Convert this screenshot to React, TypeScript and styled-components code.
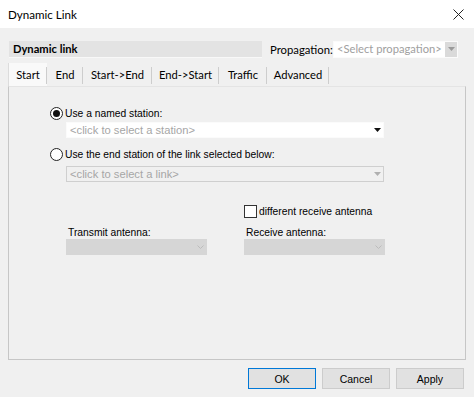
import styled, { createGlobalStyle } from "styled-components";

const GlobalStyle = createGlobalStyle`
  html, body {
    margin: 0;
    padding: 0;
    background: #f0f0f0;
  }
`;

const uiFont = `"Segoe UI", Lato, "Noto Sans", sans-serif`;
const labelFont = `"Liberation Sans", Arial, sans-serif`;

const Window = styled.div`
  width: 474px;
  height: 397px;
  display: flex;
  flex-direction: column;
  background: #f0f0f0;
  font-family: ${uiFont};
  color: #000;
  overflow: hidden;
`;

const TitleBar = styled.div`
  height: 28px;
  flex: none;
  background: #fff;
  display: flex;
  align-items: center;
  justify-content: space-between;
  padding: 0 10px 0 8px;
  font-size: 11.6px;
`;

const Body = styled.div`
  flex: 1;
  display: flex;
  flex-direction: column;
  padding: 12px 8px 8px 8px;
`;

const HeaderRow = styled.div`
  display: flex;
  align-items: center;
  height: 18px;
`;

const NameBox = styled.div`
  width: 249px;
  height: 16px;
  margin-left: 1px;
  background: #e3e3e3;
  border-bottom: 1px solid #f8f8f8;
  font-weight: bold;
  font-size: 11.2px;
  line-height: 16px;
  padding-left: 4px;
`;

const PropLabel = styled.span`
  margin-left: 8px;
  font-size: 11.3px;
  width: 63px;
  white-space: nowrap;
`;

const Combo = styled.div<{ $width: number; $disabled?: boolean; $bg?: string }>`
  width: ${(p) => p.$width}px;
  height: 16px;
  box-sizing: border-box;
  background: ${(p) => p.$bg ?? "#fff"};
  border: 1px solid ${(p) => (p.$disabled ? "#cfcfcf" : "#fbfbfb")};
  display: flex;
  align-items: center;
  justify-content: space-between;
  font-size: 11.2px;
  color: #a6a6a6;
  padding-left: 3px;
`;

const ComboText = styled.span`
  white-space: nowrap;
  line-height: 14px;
`;

const ArrowBtn = styled.div<{ $bg?: string }>`
  width: 12px;
  height: 100%;
  display: flex;
  align-items: center;
  justify-content: center;
  background: ${(p) => p.$bg ?? "transparent"};
`;

const Tabs = styled.div`
  display: flex;
  align-items: stretch;
  height: 23px;
  margin-top: 5px;
`;

const Tab = styled.div<{ $width: number; $active?: boolean }>`
  width: ${(p) => p.$width}px;
  box-sizing: border-box;
  display: flex;
  align-items: center;
  justify-content: center;
  font-size: 11.2px;
  position: relative;
  background: ${(p) => (p.$active ? "#f9f9f9" : "transparent")};
  border-left: ${(p) => (p.$active ? "1px solid #dcdcdc" : "none")};
  &::after {
    content: "";
    position: absolute;
    right: 0;
    top: 4px;
    bottom: 2px;
    width: 1px;
    background: #cdcdcd;
  }
`;

const Panel = styled.div`
  flex: 1;
  border: 1px solid #c6c6c6;
  border-top-color: #e4e4e4;
  display: flex;
  flex-direction: column;
  padding: 20px 0 0 41px;
  font-family: ${labelFont};
  font-size: 10.3px;
`;

const OptionRow = styled.label<{ $top: number }>`
  display: flex;
  align-items: center;
  gap: 2px;
  margin-top: ${(p) => p.$top}px;
  height: 13px;
`;

const Radio = styled.span<{ $checked?: boolean }>`
  width: 11px;
  height: 11px;
  border: 1px solid #222;
  border-radius: 50%;
  background: #fff;
  display: flex;
  align-items: center;
  justify-content: center;
  &::after {
    content: "";
    width: 7px;
    height: 7px;
    border-radius: 50%;
    background: ${(p) => (p.$checked ? "#111" : "transparent")};
  }
`;

const Indented = styled.div<{ $top: number }>`
  margin: ${(p) => p.$top}px 0 0 16px;
`;

const AntennaGrid = styled.div`
  margin: 23px 0 0 16px;
  display: grid;
  grid-template-columns: 141px 141px;
  column-gap: 37px;
`;

const CheckRow = styled.label`
  grid-column: 2;
  display: flex;
  align-items: center;
  gap: 2px;
  height: 13px;
`;

const Checkbox = styled.span`
  width: 11px;
  height: 11px;
  border: 1px solid #333;
  background: #fff;
`;

const FieldLabel = styled.div`
  margin-top: 8px;
  height: 13px;
  line-height: 13px;
  padding-left: 2px;
`;

const ButtonRow = styled.div`
  display: flex;
  justify-content: flex-end;
  gap: 6px;
  padding: 8px 2px 0 0;
  font-family: ${labelFont};
  font-size: 10.5px;
`;

const Button = styled.div<{ $default?: boolean }>`
  width: 68px;
  height: 21px;
  box-sizing: border-box;
  display: flex;
  align-items: center;
  justify-content: center;
  background: #e1e1e1;
  border: 1px solid ${(p) => (p.$default ? "#0078d7" : "#cccccc")};
`;

const Chevron = ({ color }: { color: string }) => (
  <svg width="7" height="4" viewBox="0 0 7 4">
    <path d="M0.5 0.5 L3.5 3.5 L6.5 0.5" fill="none" stroke={color} strokeWidth="1" />
  </svg>
);

const Triangle = ({ color }: { color: string }) => (
  <svg width="7" height="4" viewBox="0 0 7 4">
    <path d="M0 0 H7 L3.5 4 Z" fill={color} />
  </svg>
);

const tabs: [string, number][] = [
  ["Start", 39],
  ["End", 36],
  ["Start->End", 69],
  ["End->Start", 67],
  ["Traffic", 48],
  ["Advanced", 62],
];

export default function App() {
  return (
    <Window>
      <GlobalStyle />
      <TitleBar>
        <span>Dynamic Link</span>
        <svg width="11" height="11" viewBox="0 0 11 11">
          <path d="M0.5 0.5 L10.5 10.5 M10.5 0.5 L0.5 10.5" stroke="#222" strokeWidth="1" />
        </svg>
      </TitleBar>
      <Body>
        <HeaderRow>
          <NameBox>Dynamic link</NameBox>
          <PropLabel>Propagation:</PropLabel>
          <Combo $width={125} style={{ height: 17, color: "#a0a0a0" }}>
            <ComboText>&lt;Select propagation&gt;</ComboText>
            <ArrowBtn $bg="#dadada">
              <Triangle color="#9a9a9a" />
            </ArrowBtn>
          </Combo>
        </HeaderRow>
        <Tabs>
          {tabs.map(([t, w], i) => (
            <Tab key={t} $width={w} $active={i === 0}>
              {t}
            </Tab>
          ))}
        </Tabs>
        <Panel>
          <OptionRow $top={0}>
            <Radio $checked />
            Use a named station:
          </OptionRow>
          <Indented $top={2}>
            <Combo $width={318}>
              <ComboText>&lt;click to select a station&gt;</ComboText>
              <ArrowBtn>
                <Triangle color="#111" />
              </ArrowBtn>
            </Combo>
          </Indented>
          <OptionRow $top={10}>
            <Radio />
            Use the end station of the link selected below:
          </OptionRow>
          <Indented $top={5}>
            <Combo $width={318} $disabled $bg="#f0f0f0">
              <ComboText>&lt;click to select a link&gt;</ComboText>
              <ArrowBtn>
                <Triangle color="#b0b0b0" />
              </ArrowBtn>
            </Combo>
          </Indented>
          <AntennaGrid>
            <CheckRow>
              <Checkbox />
              different receive antenna
            </CheckRow>
            <FieldLabel>Transmit antenna:</FieldLabel>
            <FieldLabel>Receive antenna:</FieldLabel>
            <Combo $width={141} $bg="#d6d6d6" style={{ borderColor: "#d6d6d6" }}>
              <span />
              <ArrowBtn>
                <Chevron color="#bcbcbc" />
              </ArrowBtn>
            </Combo>
            <Combo $width={141} $bg="#d6d6d6" style={{ borderColor: "#d6d6d6" }}>
              <span />
              <ArrowBtn>
                <Chevron color="#bcbcbc" />
              </ArrowBtn>
            </Combo>
          </AntennaGrid>
        </Panel>
        <ButtonRow>
          <Button $default>OK</Button>
          <Button>Cancel</Button>
          <Button>Apply</Button>
        </ButtonRow>
      </Body>
    </Window>
  );
}
